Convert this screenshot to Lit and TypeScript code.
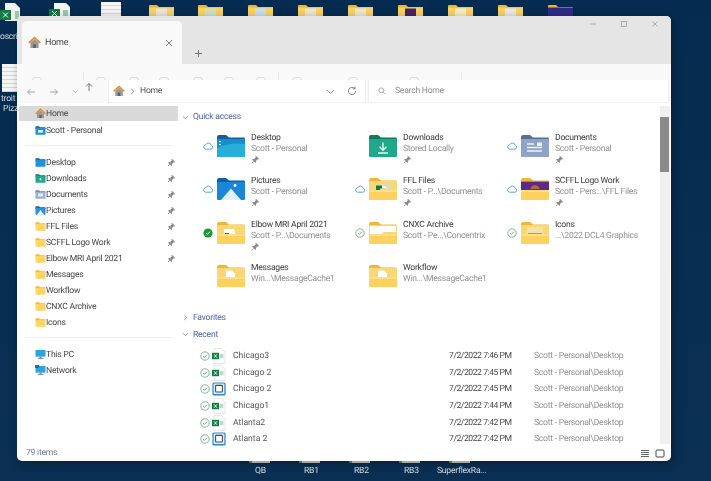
import { LitElement, html, svg, css } from 'lit';
import { customElement } from 'lit/decorators.js';

// little icon helpers, all inline svg
const homeIcon = (s = 12) => html`<svg width=${s} height=${s} viewBox="0 0 12 12">
  <path d="M2.2 6 V11 H9.8 V6 L6 2.8Z" fill="#9a9a9a"/>
  <rect x="4.8" y="7.6" width="2.4" height="3.4" fill="#5f5f5f"/>
  <path d="M.7 6.3 6 1.4 11.3 6.3" fill="none" stroke="#e8872a" stroke-width="1.5"/>
</svg>`;

const chevron = (dir: 'down' | 'right', c = '#8a8a8a') => html`<svg width="7" height="7" viewBox="0 0 7 7">
  <path d=${dir === 'down' ? 'M1 2.2 3.5 4.8 6 2.2' : 'M2.2 1 4.8 3.5 2.2 6'} fill="none" stroke=${c} stroke-width=".8"/>
</svg>`;

const pin = () => html`<svg width="9" height="9" viewBox="0 0 9 9">
  <path d="M5 .8 8.2 4 7.4 4.6 6.6 4.3 5 5.9 5 7.4 4.3 7.8 1.2 4.7 1.6 4 3.1 4 4.7 2.4 4.4 1.6Z" fill="#8b8b8b"/>
  <path d="M2.6 6.4 .9 8.1" stroke="#8b8b8b" stroke-width=".8"/>
</svg>`;

const cloud = () => html`<svg width="12" height="10" viewBox="0 0 12 10">
  <path d="M3.2 8.2 H9 A2 2 0 0 0 9.3 4.3 A3 3 0 0 0 3.8 3.6 A2.4 2.4 0 0 0 3.2 8.2Z" fill="#fff" stroke="#4a9ede" stroke-width=".9"/>
</svg>`;

const okRing = () => html`<svg width="10" height="10" viewBox="0 0 10 10">
  <circle cx="5" cy="5" r="4.2" fill="#fff" stroke="#6fb27f" stroke-width=".9"/>
  <path d="M3 5.1 4.4 6.4 7 3.7" fill="none" stroke="#5a9f6c" stroke-width=".9"/>
</svg>`;

const okSolid = () => html`<svg width="10" height="10" viewBox="0 0 10 10">
  <circle cx="5" cy="5" r="4.6" fill="#1b9a33"/>
  <path d="M3 5.1 4.4 6.4 7 3.7" fill="none" stroke="#fff" stroke-width="1"/>
</svg>`;

// big folders from the quick access grid
const bigFolder = (kind: string) => {
  if (kind === 'desktop') return html`<svg width="30" height="24" viewBox="0 0 30 24">
    <path d="M1 3 Q1 1 3 1 H10 L13 3.5 H28 Q29 3.5 29 5 V8 H1Z" fill="#10609f"/>
    <rect x="1" y="5" width="28" height="18" rx="1" fill="#1a8ec9"/>
    <path d="M1 14 Q14 8 29 10 V23 H1Z" fill="#27aedb"/>
    <rect x="3" y="7" width="2" height="1.2" fill="#d7f0fa"/><rect x="3" y="10" width="2" height="1.2" fill="#d7f0fa"/>
  </svg>`;
  if (kind === 'downloads') return html`<svg width="30" height="24" viewBox="0 0 30 24">
    <path d="M1 3 Q1 1 3 1 H10 L13 3.5 H28 Q29 3.5 29 5 V8 H1Z" fill="#0c7a5c"/>
    <rect x="1" y="5" width="28" height="18" rx="1" fill="#1fa98a"/>
    <path d="M15 8.5 V16 M11.5 12.8 15 16.3 18.5 12.8 M10 19 H20" fill="none" stroke="#e9f8f3" stroke-width="1.4"/>
  </svg>`;
  if (kind === 'documents') return html`<svg width="30" height="24" viewBox="0 0 30 24">
    <path d="M1 3 Q1 1 3 1 H10 L13 3.5 H28 Q29 3.5 29 5 V8 H1Z" fill="#5b6f8e"/>
    <rect x="1" y="5" width="28" height="18" rx="1" fill="#8da4c6"/>
    <path d="M7 10 H14 M7 13.5 H22 M7 17 H22" stroke="#eef2f8" stroke-width="1.3"/>
    <rect x="17" y="8.5" width="5" height="3.5" fill="#eef2f8"/>
  </svg>`;
  if (kind === 'pictures') return html`<svg width="30" height="24" viewBox="0 0 30 24">
    <path d="M1 3 Q1 1 3 1 H10 L13 3.5 H28 Q29 3.5 29 5 V8 H1Z" fill="#0f5ea8"/>
    <rect x="1" y="5" width="28" height="18" rx="1" fill="#1b86d6"/>
    <path d="M5 23 15 11.5 25 23Z" fill="#dff0fb"/>
    <circle cx="19" cy="8.5" r="1.4" fill="#fff"/>
  </svg>`;
  const inner: Record<string, any> = {
    elbow: svg`<path d="M8 8 H18 L20 15 H8Z" fill="#fff"/><rect x="9" y="12" width="4" height="1" fill="#d8261c"/>`,
    msg: svg`<path d="M10 6.5 H16 L19 9.5 V15 H10Z" fill="#fff"/>`,
    ffl: svg`<rect x="7" y="7" width="16" height="8" fill="#e6d9a8"/><path d="M8 13 V8.5 H14 L18 11.5 H12 V13Z" fill="#167a3c"/><path d="M14 8 L20 11.5 H14Z" fill="#fff"/>`,
    logo: svg`<rect x="1" y="4.5" width="28" height="8.5" fill="#5b2a86"/><path d="M10 12 12 9 15 8 18 9 20 12Z" fill="#b5653f"/>`,
    cnxc: svg`<path d="M2 5 H28 V11 H16 L13 13 H2Z" fill="#fff"/>`,
    icons: svg`<rect x="7" y="6" width="16" height="8" fill="#f2e3a8"/><rect x="8" y="12" width="14" height="1" fill="#46d63c"/>`,
  };
  return html`<svg width="30" height="24" viewBox="0 0 30 24">
    <path d="M1 3 Q1 1 3 1 H10 L13 3.5 H28 Q29 3.5 29 5 V14 H1Z" fill="#f2b632"/>
    <rect x="1" y="4" width="28" height="12" fill="#f8d777"/>
    ${inner[kind]}
    <path d="M1 13 H29 V22 Q29 23 28 23 H2 Q1 23 1 22Z" fill="#fdd15f"/>
    <path d="M1 13 H29 V15 H1Z" fill="#ffe28e" opacity=".8"/>
  </svg>`;
};

// small sidebar folders
const navIcon = (kind: string) => {
  if (kind === 'home') return homeIcon(13);
  if (kind === 'pc' || kind === 'net') return html`<svg width="11" height="11" viewBox="0 0 11 11">
    <rect x=".5" y="1" width="10" height="6.6" fill="#2ba3dc"/>
    ${kind === 'net' ? svg`<rect x="0" y="0" width="4" height="3" fill="#1f6fb0"/>` : ''}
    <rect x="4.4" y="7.6" width="2.2" height="1.6" fill="#6b8aa0"/><rect x="2.8" y="9.2" width="5.4" height=".9" fill="#6b8aa0"/>
  </svg>`;
  const back: Record<string, string> = { scott: '#0f62a8', desktop: '#10609f', downloads: '#0c7a5c', documents: '#6d7f9e', pictures: '#0f5ea8', folder: '#f2b632' };
  const front: Record<string, string> = { scott: '#1f93d6', desktop: '#1f93d6', downloads: '#20a78a', documents: '#9ab0cf', pictures: '#2a8fdc', folder: '#fdd666' };
  return html`<svg width="11" height="9" viewBox="0 0 11 9">
    <path d="M.5 1 Q.5 .3 1 .3 H4 L5 1.2 H10 Q10.5 1.2 10.5 2 V3 H.5Z" fill=${back[kind]}/>
    <rect x=".5" y="1.7" width="10" height="7" rx=".4" fill=${front[kind]}/>
    ${kind === 'scott' ? svg`<rect x="3.2" y="4" width="4.6" height="2.6" fill="#fff"/>` : ''}
    ${kind === 'pictures' ? svg`<path d="M2 8.7 5.5 4 9 8.7Z" fill="#fff"/>` : ''}
    ${kind === 'documents' ? svg`<rect x="3" y="3.5" width="5" height="3" fill="#e8edf5"/>` : ''}
    ${kind === 'downloads' ? svg`<rect x="4.7" y="4" width="1.6" height="2.4" fill="#e9f8f3"/>` : ''}
  </svg>`;
};

const excelDoc = () => html`<svg width="14" height="16" viewBox="0 0 14 16">
  <path d="M2 .5 H9.5 L13 4 V15.5 H2Z" fill="#fff" stroke="#d6d6d6" stroke-width=".6"/>
  <rect x="7.8" y="6" width="3.6" height="4" fill="#bcd9c6"/>
  <rect x="0" y="4.8" width="7" height="6.4" fill="#107c41"/>
  <path d="M2 6.3 5 9.8 M5 6.3 2 9.8" stroke="#fff" stroke-width=".9"/>
</svg>`;

const boxDoc = () => html`<svg width="14" height="14" viewBox="0 0 14 14">
  <rect x=".4" y=".4" width="13.2" height="13.2" rx="1.6" fill="#2c86d0"/>
  <rect x="1.6" y="1.6" width="10.8" height="10.4" rx=".8" fill="#d9eefb"/>
  <rect x="3.6" y="3.4" width="6.8" height="6.6" rx=".8" fill="#fff" stroke="#4a4a4a" stroke-width="1.1"/>
</svg>`;

// folder on the desktop, only the top part shows above the window
const deskFolder = (fill: string, page: string) => html`<svg width="25" height="14" viewBox="0 0 25 14">
  <path d="M0 1 Q0 0 1 0 H8 L10 2 H25 V14 H0Z" fill="#f0b429"/>
  <rect x="0" y="2.5" width="25" height="11.5" fill=${fill}/>
  <rect x="7" y="3.5" width="11" height="10" fill=${page}/>
</svg>`;

type Nav = { label: string; icon: string; pinned?: boolean; active?: boolean };
const navGroups: Nav[][] = [
  [
    { label: 'Home', icon: 'home', active: true },
    { label: 'Scott - Personal', icon: 'scott' },
  ],
  [
    { label: 'Desktop', icon: 'desktop', pinned: true },
    { label: 'Downloads', icon: 'downloads', pinned: true },
    { label: 'Documents', icon: 'documents', pinned: true },
    { label: 'Pictures', icon: 'pictures', pinned: true },
    { label: 'FFL Files', icon: 'folder', pinned: true },
    { label: 'SCFFL Logo Work', icon: 'folder', pinned: true },
    { label: 'Elbow MRI April 2021', icon: 'folder', pinned: true },
    { label: 'Messages', icon: 'folder' },
    { label: 'Workflow', icon: 'folder' },
    { label: 'CNXC Archive', icon: 'folder' },
    { label: 'Icons', icon: 'folder' },
  ],
  [
    { label: 'This PC', icon: 'pc' },
    { label: 'Network', icon: 'net' },
  ],
];

type Quick = { name: string; sub: string; kind: string; status?: 'cloud' | 'ok' | 'solid'; pinned?: boolean };
const quick: Quick[] = [
  { name: 'Desktop', sub: 'Scott - Personal', kind: 'desktop', status: 'cloud', pinned: true },
  { name: 'Downloads', sub: 'Stored Locally', kind: 'downloads', pinned: true },
  { name: 'Documents', sub: 'Scott - Personal', kind: 'documents', status: 'cloud', pinned: true },
  { name: 'Pictures', sub: 'Scott - Personal', kind: 'pictures', status: 'cloud', pinned: true },
  { name: 'FFL Files', sub: 'Scott - P...\\Documents', kind: 'ffl', status: 'cloud', pinned: true },
  { name: 'SCFFL Logo Work', sub: 'Scott - Pers...\\FFL Files', kind: 'logo', status: 'cloud', pinned: true },
  { name: 'Elbow MRI April 2021', sub: 'Scott - P...\\Documents', kind: 'elbow', status: 'solid', pinned: true },
  { name: 'CNXC Archive', sub: 'Scott - Pe...\\Concentrix', kind: 'cnxc', status: 'ok' },
  { name: 'Icons', sub: '...\\2022 DCL4 Graphics', kind: 'icons', status: 'ok' },
  { name: 'Messages', sub: 'Win...\\MessageCache1', kind: 'msg' },
  { name: 'Workflow', sub: 'Win...\\MessageCache1', kind: 'msg' },
];

const recent = [
  { name: 'Chicago3', date: '7/2/2022 7:46 PM', box: false },
  { name: 'Chicago 2', date: '7/2/2022 7:45 PM', box: false },
  { name: 'Chicago 2', date: '7/2/2022 7:45 PM', box: true },
  { name: 'Chicago1', date: '7/2/2022 7:44 PM', box: false },
  { name: 'Atlanta2', date: '7/2/2022 7:42 PM', box: false },
  { name: 'Atlanta 2', date: '7/2/2022 7:42 PM', box: true },
];

// toolbar is almost hidden behind the address row, only the tops peek out
const toolbarMarks = [36, 100, 133, 163, 197, 228, 260, 296, 352, 413];
const toolbarSeps = [83, 278, 461];

// desktop behind the window
const topFolders = [
  { x: 149, fill: '#f7d26a', page: '#ece6d2' },
  { x: 198, fill: '#f7d26a', page: '#cfe0c8' },
  { x: 248, fill: '#f7d26a', page: '#c9def0' },
  { x: 298, fill: '#f7d26a', page: '#ece6d2' },
  { x: 348, fill: '#f7d26a', page: '#ece6d2' },
  { x: 398, fill: '#f7d26a', page: '#4a2260' },
  { x: 448, fill: '#f7d26a', page: '#f7edc4' },
  { x: 498, fill: '#f7d26a', page: '#e8e8e8' },
  { x: 548, fill: '#2f2a86', page: '#2f2a86' },
];
const bottomLabels = [
  { x: 255, t: 'QB' }, { x: 304, t: 'RB1' }, { x: 354, t: 'RB2' }, { x: 404, t: 'RB3' }, { x: 437, t: 'SuperflexRa...' },
];
const stubs = [249, 299, 349, 399, 449];

@customElement('app-root')
export class AppRoot extends LitElement {
  static styles = css`
    :host {
      display: block;
      position: relative;
      width: 711px;
      height: 481px;
      overflow: hidden;
      background: linear-gradient(#052c50, #0a2f52);
      font-family: Roboto, 'Noto Sans', sans-serif;
      font-size: 8.6px;
      letter-spacing: -0.25px;
      text-rendering: geometricPrecision;
      color: #3a3a3a;
      filter: blur(0.45px);
    }
    .desk { position: absolute; }
    .desk-label { position: absolute; color: #d5dde5; line-height: 9px; white-space: nowrap; }
    .lines { background: repeating-linear-gradient(#f5f5f5 0 3px, #cfd8e0 3px 4px); }
    .stub { top: 461px; width: 18px; height: 2px; background: #d4d4d4; border-left: 3px solid #4f9a68; }

    .window {
      position: absolute;
      left: 17px;
      top: 16px;
      width: 654px;
      height: 445px;
      display: flex;
      flex-direction: column;
      background: #fff;
      border-radius: 5px;
      overflow: hidden;
      box-shadow: 2px 2px 8px rgba(0, 0, 0, 0.35);
    }

    .titlebar { height: 48px; flex: none; background: #e5e5e5; display: flex; align-items: flex-end; padding-left: 5px; position: relative; }
    .tab {
      width: 160px; height: 43px; background: #f9f9f9; border-radius: 5px 5px 0 0;
      display: flex; align-items: center; gap: 4px; padding: 0 9px 0 6px; box-sizing: border-box;
      font-size: 9px; color: #444;
    }
    .tab span { flex: 1; }
    .newtab { margin: 0 0 6px 12px; }
    .caption { position: absolute; top: 4px; right: 12px; display: flex; gap: 23px; }

    .toolbar { height: 16px; flex: none; background: #f9f9f9; position: relative; overflow: hidden; }
    .mark { position: absolute; top: 13px; width: 8px; height: 8px; border: 1px solid #dcdcdc; border-radius: 3px; }
    .tsep { position: absolute; top: 8px; width: 1px; height: 8px; background: #e6e6e6; }

    .address { height: 23px; flex: none; display: flex; background: #f9f9f9; }
    .nav { width: 91px; flex: none; display: flex; align-items: center; }
    .nav svg { flex: none; }
    .nav .b1 { margin-left: 9px; }
    .nav .b2 { margin-left: 13px; }
    .nav .b3 { margin-left: 13px; display: flex; }
    .nav .b4 { margin: -9px 0 0 5px; }
    .crumb {
      width: 258px; flex: none; background: #fff; border: 1px solid #f0f0f0; border-width: 0 1px 1px 1px;
      display: flex; align-items: center; box-sizing: border-box; padding-left: 4px; gap: 4px; color: #555;
    }
    .crumb .grow { flex: 1; }
    .crumb .caret { margin-right: 8px; display: flex; }
    .refresh { margin-right: 8px; }
    .search {
      flex: 1; margin: 0 2px 0 2px; background: #fff; border: 1px solid #f0f0f0; border-width: 0 1px 1px 1px;
      display: flex; align-items: center; gap: 9px; padding-left: 9px; color: #8c8c8c;
    }

    .main { flex: 1; min-height: 0; display: flex; background: #fff; }

    .side { width: 159px; flex: none; padding: 3px 0 0 2px; box-sizing: content-box; }
    .row { height: 16px; display: flex; align-items: center; padding-left: 16px; color: #454545; }
    .row.active { background: #d9d9d9; height: 15px; margin-bottom: 1px; }
    .row .ico { width: 11px; display: flex; justify-content: center; flex: none; }
    .row .txt { flex: 1; padding-top: 1px; }
    .row .pn { margin-right: 2px; display: flex; }
    .divider { height: 1px; background: #eeeeee; margin: 7px 5px 8px 5px; }

    .content { flex: 1; min-width: 0; overflow: hidden; padding-top: 7px; }
    .sec { height: 14px; display: flex; align-items: center; gap: 4px; padding-left: 4px; color: #4a64a0; }
    .grid { display: grid; grid-template-columns: repeat(3, 152px); grid-auto-rows: 43.4px; padding: 10px 0 0 24px; }
    .item { display: flex; align-items: flex-start; }
    .status { width: 13px; height: 24px; flex: none; display: flex; align-items: center; justify-content: center; margin-left: -1px; }
    .thumb { width: 30px; height: 24px; flex: none; margin: 0 5px 0 2px; }
    .names { line-height: 11px; white-space: nowrap; margin-top: -1px; }
    .names .n { color: #3a3a3a; }
    .names .s { color: #909090; }
    .names .p { height: 10px; display: block; }

    .favs { margin-top: 3px; }
    .recents { margin-top: 3px; }
    .list { padding: 6px 0 0 21px; }
    .lrow { height: 16.7px; display: grid; grid-template-columns: 12px 16px 222px 85px 1fr; align-items: center; }
    .lrow .ic { display: flex; justify-content: center; }
    .lrow .date { color: #444; letter-spacing: -0.45px; }
    .lrow .nm { color: #555; padding-left: 6px; letter-spacing: 0; }
    .lrow .path { color: #909090; }

    .scroll { width: 10px; flex: none; background: #f0f0f0; margin: 3px 1px 2px 0; box-sizing: border-box; padding: 11px 1px 0 0; }
    .scroll i { display: block; height: 55px; background: #8a8a8a; }

    .status-bar { height: 14px; flex: none; display: flex; align-items: center; padding: 0 6px 1px 9px; color: #6d7a8a; gap: 5px; }
    .status-bar .grow { flex: 1; }
  `;

  render() {
    return html`
      ${this.renderDesktop()}
      <div class="window">
        <div class="titlebar">
          <div class="tab">
            ${homeIcon(13)}<span>Home</span>
            <svg width="8" height="8" viewBox="0 0 8 8"><path d="M1 1 7 7 M7 1 1 7" stroke="#666" stroke-width=".8"/></svg>
          </div>
          <svg class="newtab" width="9" height="9" viewBox="0 0 9 9"><path d="M4.5 1 V8 M1 4.5 H8" stroke="#666" stroke-width=".9"/></svg>
          <div class="caption">
            <svg width="8" height="8" viewBox="0 0 8 8"><path d="M1 4 H7" stroke="#a0a0a0" stroke-width=".8"/></svg>
            <svg width="8" height="8" viewBox="0 0 8 8"><rect x="1.5" y="1.5" width="5" height="5" fill="none" stroke="#a0a0a0" stroke-width=".8"/></svg>
            <svg width="8" height="8" viewBox="0 0 8 8"><path d="M1.5 1.5 6.5 6.5 M6.5 1.5 1.5 6.5" stroke="#a0a0a0" stroke-width=".8"/></svg>
          </div>
        </div>
        <div class="toolbar">
          ${toolbarMarks.map((x) => html`<i class="mark" style="left:${x - 21}px"></i>`)}
          ${toolbarSeps.map((x) => html`<i class="tsep" style="left:${x - 17}px"></i>`)}
        </div>
        <div class="address">
          <div class="nav">
            <svg class="b1" width="10" height="10" viewBox="0 0 10 10"><path d="M9 5 H1.5 M4.5 2 1.5 5 4.5 8" fill="none" stroke="#9a9a9a" stroke-width=".9"/></svg>
            <svg class="b2" width="10" height="10" viewBox="0 0 10 10"><path d="M1 5 H8.5 M5.5 2 8.5 5 5.5 8" fill="none" stroke="#9a9a9a" stroke-width=".9"/></svg>
            <span class="b3">${chevron('down', '#9a9a9a')}</span>
            <svg class="b4" width="10" height="10" viewBox="0 0 10 10"><path d="M5 9 V1.5 M2 4.5 5 1.5 8 4.5" fill="none" stroke="#666" stroke-width=".9"/></svg>
          </div>
          <div class="crumb">
            ${homeIcon(12)}${chevron('right', '#777')}<span>Home</span>
            <span class="grow"></span>
            <span class="caret"><svg width="9" height="9" viewBox="0 0 9 9"><path d="M1 3 4.5 6.5 8 3" fill="none" stroke="#777" stroke-width=".8"/></svg></span>
            <svg class="refresh" width="10" height="10" viewBox="0 0 10 10"><path d="M8.6 5 A3.6 3.6 0 1 1 7.4 2.3" fill="none" stroke="#666" stroke-width=".8"/><path d="M8 .6 V2.9 H5.7" fill="none" stroke="#666" stroke-width=".8"/></svg>
          </div>
          <div class="search">
            <svg width="8" height="8" viewBox="0 0 8 8"><circle cx="3.3" cy="3.3" r="2.4" fill="none" stroke="#999" stroke-width=".8"/><path d="M5.1 5.1 7.4 7.4" stroke="#999" stroke-width=".8"/></svg>
            <span>Search Home</span>
          </div>
        </div>
        <div class="main">
          <div class="side">
            ${navGroups.map((g, i) => html`
              ${i ? html`<div class="divider"></div>` : ''}
              ${g.map((n) => html`
                <div class="row ${n.active ? 'active' : ''}">
                  <span class="ico">${navIcon(n.icon)}</span>
                  <span class="txt">${n.label}</span>
                  ${n.pinned ? html`<span class="pn">${pin()}</span>` : ''}
                </div>`)}
            `)}
          </div>
          <div class="content">
            <div class="sec">${chevron('down')}<span>Quick access</span></div>
            <div class="grid">
              ${quick.map((q) => html`
                <div class="item">
                  <span class="status">${q.status === 'cloud' ? cloud() : q.status === 'ok' ? okRing() : q.status === 'solid' ? okSolid() : ''}</span>
                  <span class="thumb">${bigFolder(q.kind)}</span>
                  <div class="names">
                    <div class="n">${q.name}</div>
                    <div class="s">${q.sub}</div>
                    ${q.pinned ? html`<span class="p">${pin()}</span>` : ''}
                  </div>
                </div>`)}
            </div>
            <div class="sec favs">${chevron('right')}<span>Favorites</span></div>
            <div class="sec recents">${chevron('down')}<span>Recent</span></div>
            <div class="list">
              ${recent.map((r) => html`
                <div class="lrow">
                  <span class="ic">${okRing()}</span>
                  <span class="ic">${r.box ? boxDoc() : excelDoc()}</span>
                  <span class="nm">${r.name}</span>
                  <span class="date">${r.date}</span>
                  <span class="path">Scott - Personal\\Desktop</span>
                </div>`)}
            </div>
          </div>
          <div class="scroll"><i></i></div>
        </div>
        <div class="status-bar">
          <span>79 items</span><span class="grow"></span>
          <svg width="10" height="9" viewBox="0 0 10 9"><path d="M1 1.5 H9 M1 3.5 H9 M1 5.5 H9 M1 7.5 H9" stroke="#555" stroke-width=".9"/></svg>
          <svg width="10" height="9" viewBox="0 0 10 9"><rect x="1" y="1" width="8" height="7" rx="1" fill="none" stroke="#444" stroke-width="1"/></svg>
        </div>
      </div>
    `;
  }

  renderDesktop() {
    return html`
      <svg class="desk" style="left:0;top:3px" width="21" height="18" viewBox="0 0 21 18"><path d="M5 0 H15 L20 5 V18 H5Z" fill="#f4f4f4"/><rect x="15" y="8" width="4" height="8" fill="#9fc9ae"/><rect x="0" y="7" width="11" height="10" fill="#107c41"/><path d="M3 9.5 8 14.5 M8 9.5 3 14.5" stroke="#fff"/></svg>
      <svg class="desk" style="left:49px;top:3px" width="22" height="14" viewBox="0 0 22 14"><path d="M5 0 H17 L21 4 V14 H5Z" fill="#f4f4f4"/><rect x="14" y="7" width="5" height="7" fill="#9fc9ae"/><rect x="0" y="6" width="11" height="8" fill="#107c41"/><path d="M3 8 8 13 M8 8 3 13" stroke="#fff"/></svg>
      <div class="desk lines" style="left:101px;top:2px;width:20px;height:15px"></div>
      ${topFolders.map((f) => html`<span class="desk" style="left:${f.x}px;top:5px">${deskFolder(f.fill, f.page)}</span>`)}
      <div class="desk lines" style="left:2px;top:64px;width:15px;height:28px"></div>
      <span class="desk-label" style="left:0;top:33px">oscript</span>
      <span class="desk-label" style="left:1px;top:95px">troit</span>
      <span class="desk-label" style="left:3px;top:105px">Pizz</span>
      ${stubs.map((x) => html`<i class="desk stub" style="left:${x}px"></i>`)}
      ${bottomLabels.map((l) => html`<span class="desk-label" style="left:${l.x}px;top:467px">${l.t}</span>`)}
    `;
  }
}
